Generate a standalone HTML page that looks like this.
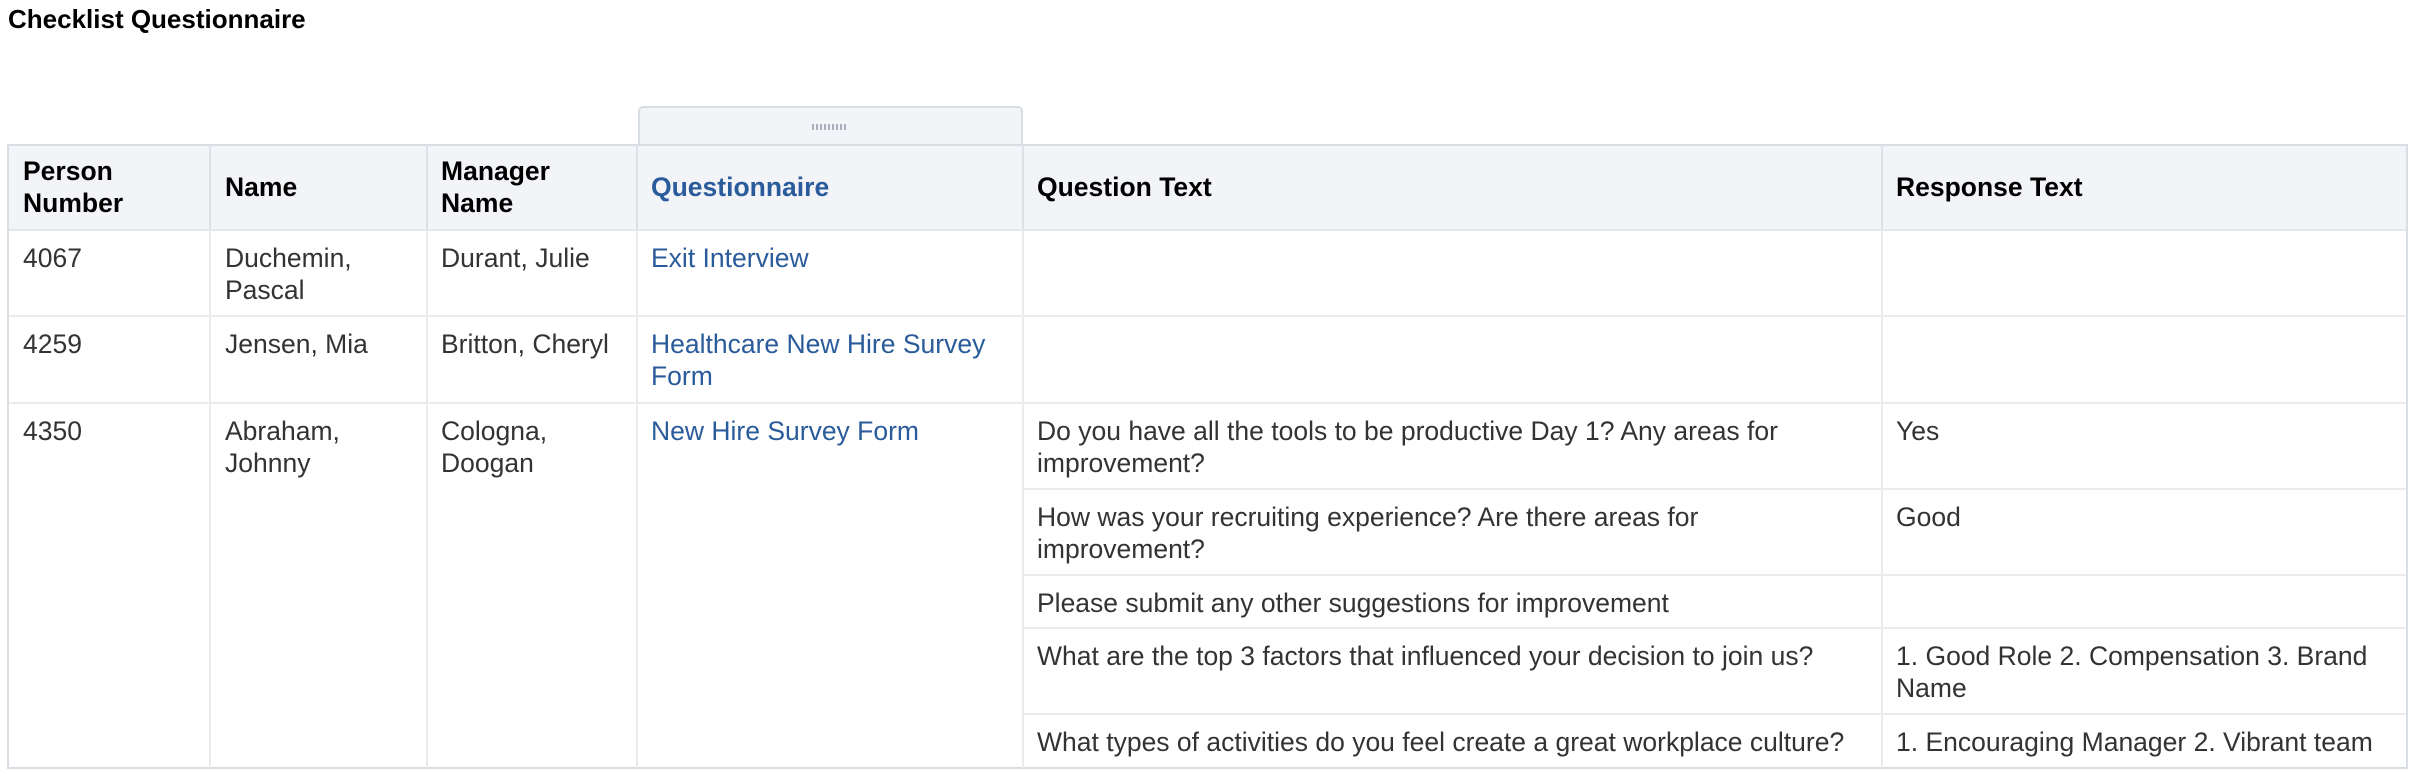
<!DOCTYPE html>
<html><head><meta charset="utf-8"><style>
html,body{margin:0;padding:0;background:#fff;width:2428px;height:778px;overflow:hidden;position:relative;font-family:"Liberation Sans",Arial,sans-serif}
.t{position:absolute;font-size:26.5px;line-height:32px;color:#333;white-space:nowrap}
.h{font-weight:bold;color:#000}
.b{color:#2a5b9a}
.l{position:absolute;background:#ebebeb}
.o{position:absolute;background:#d9dee5}
</style></head><body>
<div style="position:absolute;left:8px;top:4px;font-weight:bold;font-size:26px;line-height:30px;color:#000">Checklist Questionnaire</div>
<div style="position:absolute;left:638px;top:106px;width:381px;height:40px;background:#f2f4f8;border:2px solid #d9dee5;border-bottom:none;border-radius:5px 5px 0 0"></div>
<div style="position:absolute;left:812px;top:124px;width:34px;height:6px;background:repeating-linear-gradient(90deg,#a8b0bc 0 2px,transparent 2px 4px)"></div>
<div style="position:absolute;left:8px;top:145px;width:2399px;height:85px;background:#f2f4f8"></div>
<div class="o" style="left:8px;top:144px;width:2400px;height:2px"></div>
<div class="o" style="left:8px;top:229px;width:2400px;height:2px;background:#e3e6ea"></div>
<div class="l" style="left:8px;top:315px;width:2400px;height:2px"></div>
<div class="l" style="left:8px;top:402px;width:2400px;height:2px"></div>
<div class="l" style="left:1023px;top:488px;width:1385px;height:2px"></div>
<div class="l" style="left:1023px;top:574px;width:1385px;height:2px"></div>
<div class="l" style="left:1023px;top:627px;width:1385px;height:2px"></div>
<div class="l" style="left:1023px;top:713px;width:1385px;height:2px"></div>
<div class="o" style="left:8px;top:767px;width:2400px;height:2px"></div>
<div class="o" style="left:7px;top:144px;width:2px;height:625px"></div>
<div class="o" style="left:2406px;top:144px;width:2px;height:625px"></div>
<div class="l" style="left:209px;top:145px;width:2px;height:623px"></div>
<div class="l" style="left:426px;top:145px;width:2px;height:623px"></div>
<div class="l" style="left:636px;top:145px;width:2px;height:623px"></div>
<div class="l" style="left:1022px;top:145px;width:2px;height:623px"></div>
<div class="l" style="left:1881px;top:145px;width:2px;height:623px"></div>
<div class="o" style="left:209px;top:145px;width:2px;height:85px;background:#dde1e6"></div>
<div class="o" style="left:426px;top:145px;width:2px;height:85px;background:#dde1e6"></div>
<div class="o" style="left:636px;top:145px;width:2px;height:85px;background:#dde1e6"></div>
<div class="o" style="left:1022px;top:145px;width:2px;height:85px;background:#dde1e6"></div>
<div class="o" style="left:1881px;top:145px;width:2px;height:85px;background:#dde1e6"></div>
<div class="t h" style="left:23px;top:155px">Person<br>Number</div>
<div class="t h" style="left:225px;top:171px">Name</div>
<div class="t h" style="left:441px;top:155px">Manager<br>Name</div>
<div class="t h b" style="left:651px;top:171px;color:#2a5b9a">Questionnaire</div>
<div class="t h" style="left:1037px;top:171px">Question Text</div>
<div class="t h" style="left:1896px;top:171px">Response Text</div>
<div class="t" style="left:23px;top:242px">4067</div>
<div class="t" style="left:225px;top:242px">Duchemin,<br>Pascal</div>
<div class="t" style="left:441px;top:242px">Durant, Julie</div>
<div class="t b" style="left:651px;top:242px">Exit Interview</div>
<div class="t" style="left:23px;top:328px">4259</div>
<div class="t" style="left:225px;top:328px">Jensen, Mia</div>
<div class="t" style="left:441px;top:328px">Britton, Cheryl</div>
<div class="t b" style="left:651px;top:328px">Healthcare New Hire Survey<br>Form</div>
<div class="t" style="left:23px;top:415px">4350</div>
<div class="t" style="left:225px;top:415px">Abraham,<br>Johnny</div>
<div class="t" style="left:441px;top:415px">Cologna,<br>Doogan</div>
<div class="t b" style="left:651px;top:415px">New Hire Survey Form</div>
<div class="t" style="left:1037px;top:415px">Do you have all the tools to be productive Day 1? Any areas for<br>improvement?</div>
<div class="t" style="left:1896px;top:415px">Yes</div>
<div class="t" style="left:1037px;top:501px">How was your recruiting experience? Are there areas for<br>improvement?</div>
<div class="t" style="left:1896px;top:501px">Good</div>
<div class="t" style="left:1037px;top:587px">Please submit any other suggestions for improvement</div>
<div class="t" style="left:1037px;top:640px">What are the top 3 factors that influenced your decision to join us?</div>
<div class="t" style="left:1896px;top:640px">1. Good Role 2. Compensation 3. Brand<br>Name</div>
<div class="t" style="left:1037px;top:726px">What types of activities do you feel create a great workplace culture?</div>
<div class="t" style="left:1896px;top:726px">1. Encouraging Manager 2. Vibrant team</div>
</body></html>
